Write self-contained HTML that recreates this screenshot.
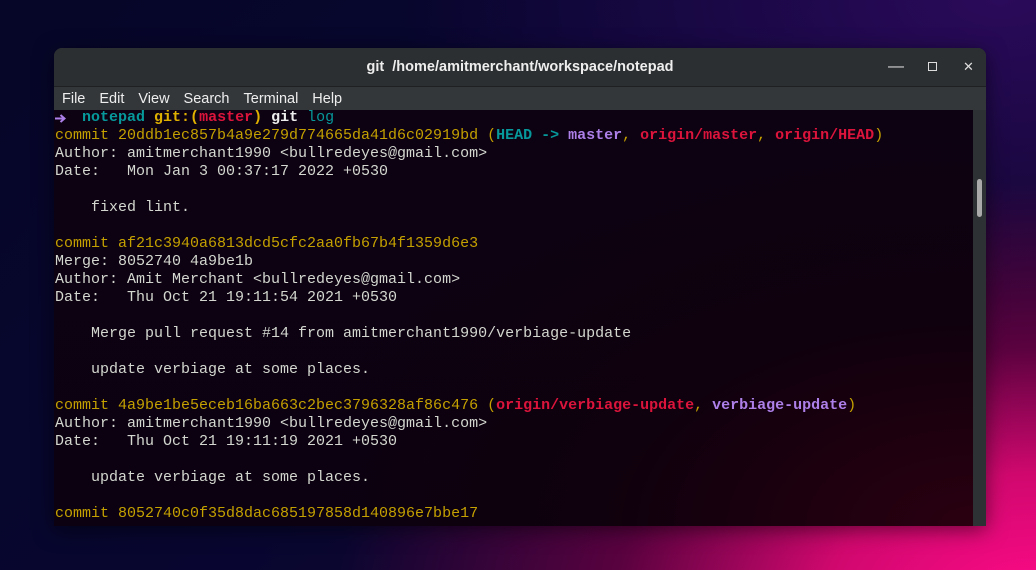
<!DOCTYPE html>
<html><head><meta charset="utf-8"><style>
html,body{margin:0;padding:0;width:1036px;height:570px;overflow:hidden}
body{background:
 radial-gradient(ellipse 700px 420px at 1036px 600px,#ff0a88 0%,#d0086e 30%,rgba(120,0,70,0.7) 60%,rgba(0,0,0,0) 100%),
 radial-gradient(ellipse 600px 300px at 1000px 0px,#2a0a5a 0%,rgba(0,0,0,0) 100%),
 linear-gradient(135deg,#060628 0%,#080630 50%,#1a0630 100%);
 font-family:"Liberation Sans",sans-serif;position:relative}
.win{position:absolute;left:54px;top:48px;width:932px;height:478px;border-radius:8px 8px 0 0;overflow:hidden;background:#2d3133;box-shadow:0 4px 20px rgba(0,0,0,.5)}
.title{height:38px;background:#2c2f31;border-bottom:1px solid #1e2022;color:#eee;font-weight:bold;font-size:14.5px;text-align:center;line-height:38px}
.ctl{position:absolute;top:0;height:38px;line-height:38px;color:#ddd}
.menu{height:24px;background:#33373a;color:#eee;font-size:14.5px;line-height:24px;padding-left:8px}
.menu span{margin-right:14px}
.term{position:absolute;left:0;top:62px;width:919px;height:416px;background:
 radial-gradient(ellipse 700px 400px at 919px 416px,#2a0010 0%,rgba(20,0,10,0.5) 50%,rgba(0,0,0,0) 100%),
 linear-gradient(180deg,#0d0212,#0b0110);}
.sb{position:absolute;left:919px;top:62px;width:13px;height:416px;background:#2d3133}
.thumb{position:absolute;left:923px;top:131px;width:5px;height:38px;border-radius:3px;background:#aaa}
pre{margin:0;padding:0 0 0 1px;font-family:"Liberation Mono",monospace;font-size:15px;line-height:18px;color:#d3d7cf;position:absolute;top:-1px;left:0}
.y{color:#c4a000}.c{color:#06989a;font-weight:bold}.r{color:#dc143c;font-weight:bold}.p{color:#ad7fe8;font-weight:bold}.w{color:#eee;font-weight:bold}.yb{color:#e0b000;font-weight:bold}.cl{color:#06989a}
.arr{display:inline-block;width:9px;height:18px;vertical-align:top;position:relative}
.arr svg{position:absolute;left:0;top:5px}
</style></head><body>
<div class="win">
 <div class="title">git&nbsp; /home/amitmerchant/workspace/notepad</div>
 <div class="ctl" style="left:834px">&#8212;</div>
 <div class="ctl" style="left:874px;"><span style="display:inline-block;width:7px;height:7px;border:1.5px solid #ddd;vertical-align:middle"></span></div>
 <div class="ctl" style="left:909px;font-size:13px">✕</div>
 <div class="menu"><span>File</span><span>Edit</span><span>View</span><span>Search</span><span>Terminal</span><span>Help</span></div>
 <div class="term"><pre><span class="arr"><svg width="11" height="9" viewBox="0 0 11 9"><path d="M0 4.5H9M5.5 1L9.5 4.5L5.5 8" stroke="#ad7fe8" stroke-width="2" fill="none"/></svg></span>  <span class="c">notepad</span> <span class="yb">git:(</span><span class="r">master</span><span class="yb">)</span> <span class="w">git</span> <span class="cl">log</span>
<span class="y">commit 20ddb1ec857b4a9e279d774665da41d6c02919bd (</span><span class="c">HEAD -&gt; </span><span class="p">master</span><span class="y">, </span><span class="r">origin/master</span><span class="y">, </span><span class="r">origin/HEAD</span><span class="y">)</span>
Author: amitmerchant1990 &lt;bullredeyes@gmail.com&gt;
Date:   Mon Jan 3 00:37:17 2022 +0530

    fixed lint.

<span class="y">commit af21c3940a6813dcd5cfc2aa0fb67b4f1359d6e3</span>
Merge: 8052740 4a9be1b
Author: Amit Merchant &lt;bullredeyes@gmail.com&gt;
Date:   Thu Oct 21 19:11:54 2021 +0530

    Merge pull request #14 from amitmerchant1990/verbiage-update

    update verbiage at some places.

<span class="y">commit 4a9be1be5eceb16ba663c2bec3796328af86c476 (</span><span class="r">origin/verbiage-update</span><span class="y">, </span><span class="p">verbiage-update</span><span class="y">)</span>
Author: amitmerchant1990 &lt;bullredeyes@gmail.com&gt;
Date:   Thu Oct 21 19:11:19 2021 +0530

    update verbiage at some places.

<span class="y">commit 8052740c0f35d8dac685197858d140896e7bbe17</span></pre></div>
 <div class="sb"></div><div class="thumb"></div>
</div>
</body></html>
